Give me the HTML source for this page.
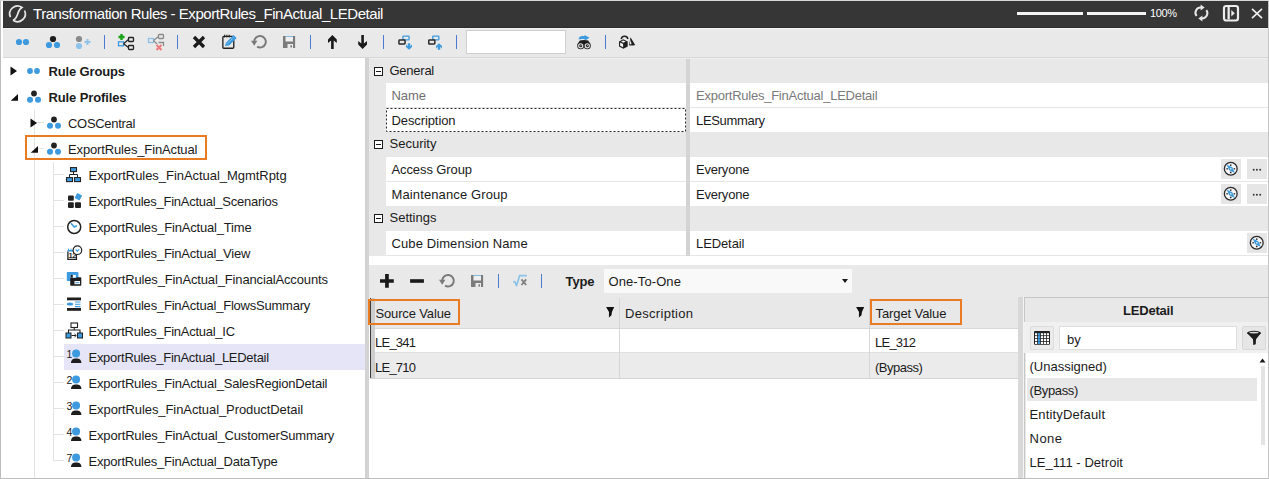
<!DOCTYPE html>
<html><head><meta charset="utf-8"><title>Transformation Rules</title>
<style>
html,body{margin:0;padding:0;}
body{width:1269px;height:479px;position:relative;overflow:hidden;background:#fff;font-family:"Liberation Sans",sans-serif;}
.t{position:absolute;white-space:nowrap;}
svg{display:block;overflow:visible;}
</style></head><body>
<div style="position:absolute;left:0px;top:0px;width:1269px;height:479px;background:#ffffff;"></div>
<div style="position:absolute;left:3px;top:1px;width:1265px;height:27px;background:#363636;"></div>
<div style="position:absolute;left:3px;top:27px;width:1265px;height:1px;background:#2c2c2c;"></div>
<svg style="position:absolute;left:6px;top:2px;" width="24" height="24" viewBox="0 0 24 24"><path d="M4.43 15.1 A7.8 7.8 0 0 1 15.97 5.41 C13 6.8, 12.6 9.5, 11.6 12.2 C10.6 15, 9.6 17.4, 7.03 18.19 A7.8 7.8 0 0 0 7.03 18.19" fill="none" stroke="#e6e6e6" stroke-width="1.7"/><path d="M18.57 8.5 A7.8 7.8 0 0 1 7.03 18.19" fill="none" stroke="#e6e6e6" stroke-width="1.7"/></svg>
<div class="t" style="left:33px;top:6.300000000000001px;font-size:15px;line-height:15px;font-weight:normal;color:#ffffff;letter-spacing:-0.45px;">Transformation Rules - ExportRules_FinActual_LEDetail</div>
<div style="position:absolute;left:1017px;top:12px;width:66px;height:3px;background:#f4f4f4;"></div>
<div style="position:absolute;left:1087px;top:12px;width:59px;height:3px;background:#f4f4f4;"></div>
<div class="t" style="left:1150px;top:8.19px;font-size:11px;line-height:11px;font-weight:normal;color:#ffffff;letter-spacing:-0.4px;">100%</div>
<svg style="position:absolute;left:1192px;top:3px;" width="18" height="19" viewBox="0 0 18 19"><path d="M4.6 13 A5.2 5.2 0 0 1 9.3 4.6" fill="none" stroke="#e6e6e6" stroke-width="2"/><path d="M8.6 1.6 L12.6 4.5 L8.6 7.6 Z" fill="#e6e6e6"/><path d="M14.4 7.2 A5.2 5.2 0 0 1 9.7 15.4" fill="none" stroke="#e6e6e6" stroke-width="2"/><path d="M10.4 12.4 L6.4 15.5 L10.4 18.4 Z" fill="#e6e6e6"/></svg>
<svg style="position:absolute;left:1222px;top:4px;" width="18" height="18" viewBox="0 0 18 18"><rect x="2" y="2" width="14" height="14.5" rx="2.2" fill="none" stroke="#ececec" stroke-width="2.2"/><rect x="5.5" y="3" width="2.3" height="12.5" fill="#ececec"/><path d="M9.3 6 L12.8 9.2 L9.3 12.6 Z" fill="#ececec"/></svg>
<svg style="position:absolute;left:1251px;top:8px;" width="12" height="11" viewBox="0 0 12 11"><path d="M1 0.8 L11 10.2 M11 0.8 L1 10.2" stroke="#ececec" stroke-width="1.7"/></svg>
<div style="position:absolute;left:3px;top:28px;width:1265px;height:1px;background:#f3f3f3;"></div>
<div style="position:absolute;left:3px;top:29px;width:1265px;height:28px;background:#e9e9e9;"></div>
<div style="position:absolute;left:3px;top:57px;width:1265px;height:1px;background:#d6d6d6;"></div>
<svg style="position:absolute;left:14px;top:37px;" width="18" height="10" viewBox="0 0 18 10"><circle cx="5" cy="5" r="3.1" fill="#3d9ade"/><circle cx="12" cy="5" r="3.1" fill="#3d9ade"/></svg>
<svg style="position:absolute;left:44px;top:34px;" width="18" height="16" viewBox="0 0 18 16"><circle cx="9" cy="5" r="3.1" fill="#1e1e1e"/><circle cx="5" cy="11" r="3.1" fill="#3d9ade"/><circle cx="13" cy="11" r="3.1" fill="#3d9ade"/></svg>
<svg style="position:absolute;left:74px;top:34px;" width="18" height="17" viewBox="0 0 18 17"><circle cx="5" cy="5" r="3.1" fill="#8a8a8a"/><circle cx="5" cy="12" r="3.1" fill="#8fc4ea"/><path d="M10.5 8 H16.5 M13.5 5 V11" stroke="#8fc4ea" stroke-width="2"/></svg>
<div style="position:absolute;left:104px;top:35px;width:1px;height:14px;background:#4b7bd0;"></div>
<svg style="position:absolute;left:116px;top:33px;" width="20" height="19" viewBox="0 0 20 19"><path d="M5.5 1 V7 M2.5 4 H8.5" stroke="#17a317" stroke-width="2.4"/><rect x="2.5" y="8.8" width="5" height="4" fill="none" stroke="#3d9ade" stroke-width="1.3"/><rect x="12.5" y="4.5" width="5" height="4" rx="0.8" fill="none" stroke="#222" stroke-width="1.3"/><rect x="12.5" y="12.5" width="5" height="4" rx="0.8" fill="none" stroke="#222" stroke-width="1.3"/><path d="M7.5 10.8 L12.5 6.5 M7.5 10.8 L12.5 14.5" stroke="#222" stroke-width="1.2" fill="none"/></svg>
<svg style="position:absolute;left:146px;top:33px;" width="20" height="19" viewBox="0 0 20 19"><rect x="2.5" y="5.5" width="5" height="4" fill="none" stroke="#8cc0e8" stroke-width="1.3"/><rect x="12.5" y="1.5" width="5" height="4" rx="0.8" fill="none" stroke="#8a8a8a" stroke-width="1.3"/><path d="M12.5 9.5 H17.5 V13" fill="none" stroke="#8a8a8a" stroke-width="1.3"/><path d="M7.5 7.5 L12.5 3.5 M7.5 7.5 L11 11" stroke="#8a8a8a" stroke-width="1.2" fill="none"/><path d="M10.5 12 L15.5 17 M15.5 12 L10.5 17" stroke="#ee7b7b" stroke-width="2"/></svg>
<div style="position:absolute;left:177px;top:35px;width:1px;height:14px;background:#4b7bd0;"></div>
<svg style="position:absolute;left:192px;top:35px;" width="14" height="14" viewBox="0 0 14 14"><path d="M2 2 L12 12 M12 2 L2 12" stroke="#1a1a1a" stroke-width="3.2"/></svg>
<svg style="position:absolute;left:221px;top:33px;" width="17" height="17" viewBox="0 0 17 17"><rect x="1.85" y="3.4" width="10.9" height="11.8" rx="1" fill="none" stroke="#222" stroke-width="1.35"/><path d="M3.6 1.8 V4.4 M5.9 1.8 V4.4 M8.2 1.8 V4.4" stroke="#222" stroke-width="1.1"/><path d="M3.9 12.9 L5.1 9.4 L12.6 1.9 L15.6 4.9 L8.1 12.4 Z" fill="#3d9ade"/><path d="M6.3 10.5 L12.5 4.3" stroke="#e8f3fb" stroke-width="0.7" stroke-dasharray="1.6 1.2"/></svg>
<svg style="position:absolute;left:250px;top:34px;" width="17" height="16" viewBox="0 0 17 16"><path d="M4.2 8 A5.8 5.8 0 1 1 7.1 12.72" fill="none" stroke="#7b7b7b" stroke-width="2"/><path d="M1 6.8 L7.4 6.8 L4.2 11.8 Z" fill="#7b7b7b"/></svg>
<svg style="position:absolute;left:282px;top:35px;" width="14" height="14" viewBox="0 0 14 14"><rect x="1" y="1" width="12.1" height="12" fill="#7b7b7b"/><rect x="3.5" y="1.7" width="7.5" height="4.8" fill="#efefef"/><rect x="3.5" y="1" width="7.5" height="0.9" fill="#7fbfe8"/><rect x="5.5" y="9" width="5.5" height="4" fill="#ebebeb"/><rect x="8.4" y="10.3" width="1.6" height="2.2" fill="#7b7b7b"/></svg>
<div style="position:absolute;left:310px;top:35px;width:1px;height:14px;background:#4b7bd0;"></div>
<svg style="position:absolute;left:326px;top:34px;" width="13" height="16" viewBox="0 0 13 16"><path d="M5.1 15 H7.7 V6.4 L10.8 9 V5.6 L6.4 1 L2 5.6 V9 L5.1 6.4 Z" fill="#1a1a1a"/></svg>
<svg style="position:absolute;left:356px;top:34px;" width="13" height="16" viewBox="0 0 13 16"><path d="M5.3 1 H7.9 V9.6 L11 7 V10.4 L6.6 15 L2.2 10.4 V7 L5.3 9.6 Z" fill="#1a1a1a"/></svg>
<div style="position:absolute;left:383px;top:35px;width:1px;height:14px;background:#4b7bd0;"></div>
<svg style="position:absolute;left:396px;top:34px;" width="18" height="17" viewBox="0 0 18 17"><rect x="6.95" y="2.05" width="6.1" height="3.9" rx="0.6" fill="none" stroke="#3d9ade" stroke-width="1.3"/><rect x="2.95" y="6.05" width="6.1" height="4" rx="0.7" fill="#e9e9e9" stroke="#2a2a2a" stroke-width="1.5"/><path d="M11.8 9.2 H14.2 V12.3 L16 10.6 V13 L13 15.8 L10 13 V10.6 L11.8 12.3 Z" fill="#3d9ade"/></svg>
<svg style="position:absolute;left:426px;top:34px;" width="18" height="17" viewBox="0 0 18 17"><rect x="6.75" y="2.05" width="6.1" height="3.9" rx="0.6" fill="none" stroke="#3d9ade" stroke-width="1.3"/><rect x="2.75" y="6.05" width="6.1" height="4" rx="0.7" fill="#e9e9e9" stroke="#2a2a2a" stroke-width="1.5"/><path d="M11.8 15.8 H14.2 V12.7 L16 14.4 V12 L13 9.2 L10 12 V14.4 L11.8 12.7 Z" fill="#3d9ade"/></svg>
<div style="position:absolute;left:456px;top:35px;width:1px;height:14px;background:#4b7bd0;"></div>
<div style="position:absolute;left:466px;top:30px;width:100px;height:24px;background:#ffffff;box-sizing:border-box;border:1px solid #cfcfcf;"></div>
<svg style="position:absolute;left:576px;top:34px;" width="15" height="16" viewBox="0 0 15 16"><path d="M2.6 5.6 C2.6 3.2, 4.2 2.1, 6.6 2.1 H8.6 V0.9 L13.6 3.8 L8.6 6.8 V4.9 H6.8 C4.8 4.9, 3.8 5, 2.6 5.6 Z" fill="#3d9ade"/><path d="M1.6 10 L3.8 6.6 Q8 5.6, 12.2 6.6 L14.4 10 Z" fill="#1e1e1e"/><circle cx="4.7" cy="11.7" r="3.5" fill="#1e1e1e"/><circle cx="11.3" cy="11.7" r="3.5" fill="#1e1e1e"/><circle cx="4.7" cy="11.8" r="2.1" fill="none" stroke="#e4e4e4" stroke-width="1.1"/><circle cx="11.3" cy="11.8" r="2.1" fill="none" stroke="#e4e4e4" stroke-width="1.1"/><path d="M4 12.5 L5.4 11.1 M10.6 12.5 L12 11.1" stroke="#e4e4e4" stroke-width="0.8"/></svg>
<div style="position:absolute;left:605px;top:35px;width:1px;height:14px;background:#4b7bd0;"></div>
<svg style="position:absolute;left:618px;top:34px;" width="18" height="16" viewBox="0 0 18 16"><path d="M3.2 5.2 A3.4 3.4 0 0 1 9.9 5.0" fill="none" stroke="#1f1f1f" stroke-width="1.5"/><path d="M1 7.6 L5.3 5.3 L9.7 7.6 V12.6 L5.4 14.7 L1 12.6 Z" fill="#1f1f1f"/><path d="M2.1 8.6 L5.1 10.1 V13.3 L2.1 11.8 Z" fill="#f4f4f4"/><path d="M3 7.6 L5.3 6.5 L7.7 7.6 L5.3 8.8 Z" fill="#f4f4f4"/><path d="M12.5 3.2 L17.2 11 Q14 12, 11 11.2 Z" fill="#1f1f1f"/><path d="M12.2 5.6 L13.6 10.2 L11.9 10.3 Z" fill="#f0f0f0"/></svg>
<div style="position:absolute;left:3px;top:58px;width:362px;height:420px;background:#ffffff;"></div>
<div style="position:absolute;left:34px;top:110px;width:1px;height:368px;background:#e3e3e3;"></div>
<div style="position:absolute;left:53px;top:162px;width:1px;height:299px;background:#e3e3e3;"></div>
<div style="position:absolute;left:36px;top:122px;width:8px;height:1px;background:#e3e3e3;"></div>
<div style="position:absolute;left:36px;top:148px;width:8px;height:1px;background:#e3e3e3;"></div>
<div style="position:absolute;left:54px;top:174px;width:10px;height:1px;background:#e3e3e3;"></div>
<div style="position:absolute;left:54px;top:200px;width:10px;height:1px;background:#e3e3e3;"></div>
<div style="position:absolute;left:54px;top:226px;width:10px;height:1px;background:#e3e3e3;"></div>
<div style="position:absolute;left:54px;top:252px;width:10px;height:1px;background:#e3e3e3;"></div>
<div style="position:absolute;left:54px;top:278px;width:10px;height:1px;background:#e3e3e3;"></div>
<div style="position:absolute;left:54px;top:304px;width:10px;height:1px;background:#e3e3e3;"></div>
<div style="position:absolute;left:54px;top:330px;width:10px;height:1px;background:#e3e3e3;"></div>
<div style="position:absolute;left:54px;top:356px;width:10px;height:1px;background:#e3e3e3;"></div>
<div style="position:absolute;left:54px;top:382px;width:10px;height:1px;background:#e3e3e3;"></div>
<div style="position:absolute;left:54px;top:408px;width:10px;height:1px;background:#e3e3e3;"></div>
<div style="position:absolute;left:54px;top:434px;width:10px;height:1px;background:#e3e3e3;"></div>
<div style="position:absolute;left:54px;top:460px;width:10px;height:1px;background:#e3e3e3;"></div>
<div style="position:absolute;left:64px;top:344px;width:301px;height:26px;background:#e5e5f7;"></div>
<div style="position:absolute;left:25px;top:135px;width:182px;height:25px;box-sizing:border-box;border:2px solid #e97b22;"></div>
<svg style="position:absolute;left:10px;top:66px;" width="8" height="10" viewBox="0 0 8 10"><path d="M0.5 0.5 L7 5 L0.5 9.5 Z" fill="#111"/></svg>
<svg style="position:absolute;left:11px;top:94px;" width="8" height="8" viewBox="0 0 8 8"><path d="M7 0 V6.8 H-0.3 Z" fill="#111"/></svg>
<svg style="position:absolute;left:30px;top:118px;" width="8" height="10" viewBox="0 0 8 10"><path d="M0.5 0.5 L7 5 L0.5 9.5 Z" fill="#111"/></svg>
<svg style="position:absolute;left:31px;top:146px;" width="8" height="8" viewBox="0 0 8 8"><path d="M7 0 V6.8 H-0.3 Z" fill="#111"/></svg>
<svg style="position:absolute;left:25px;top:66px;" width="16" height="10" viewBox="0 0 16 10"><circle cx="5" cy="5" r="2.9" fill="#3d9ade"/><circle cx="12" cy="5" r="2.9" fill="#3d9ade"/></svg>
<svg style="position:absolute;left:26px;top:90px;" width="16" height="14" viewBox="0 0 16 14"><circle cx="8" cy="3.5" r="2.9" fill="#222"/><circle cx="4" cy="9.8" r="3" fill="#3d9ade"/><circle cx="12" cy="9.8" r="3" fill="#3d9ade"/></svg>
<svg style="position:absolute;left:46px;top:116px;" width="16" height="14" viewBox="0 0 16 14"><circle cx="8" cy="3.5" r="2.9" fill="#222"/><circle cx="4" cy="9.8" r="3" fill="#3d9ade"/><circle cx="12" cy="9.8" r="3" fill="#3d9ade"/></svg>
<svg style="position:absolute;left:46px;top:142px;" width="16" height="14" viewBox="0 0 16 14"><circle cx="8" cy="3.5" r="2.9" fill="#222"/><circle cx="4" cy="9.8" r="3" fill="#3d9ade"/><circle cx="12" cy="9.8" r="3" fill="#3d9ade"/></svg>
<div class="t" style="left:48.5px;top:65.0px;font-size:13px;line-height:13px;font-weight:bold;color:#1b1b1b;letter-spacing:-0.15px;">Rule Groups</div>
<div class="t" style="left:48.5px;top:91.0px;font-size:13px;line-height:13px;font-weight:bold;color:#1b1b1b;letter-spacing:-0.12px;">Rule Profiles</div>
<div class="t" style="left:68px;top:117.0px;font-size:13px;line-height:13px;font-weight:normal;color:#1b1b1b;letter-spacing:-0.3px;">COSCentral</div>
<div class="t" style="left:68px;top:143.0px;font-size:13px;line-height:13px;font-weight:normal;color:#1b1b1b;letter-spacing:-0.14px;">ExportRules_FinActual</div>
<div class="t" style="left:88.5px;top:169.0px;font-size:13px;line-height:13px;font-weight:normal;color:#1b1b1b;letter-spacing:-0.045px;">ExportRules_FinActual_MgmtRptg</div>
<div class="t" style="left:88.5px;top:195.0px;font-size:13px;line-height:13px;font-weight:normal;color:#1b1b1b;letter-spacing:-0.257px;">ExportRules_FinActual_Scenarios</div>
<div class="t" style="left:88.5px;top:221.0px;font-size:13px;line-height:13px;font-weight:normal;color:#1b1b1b;letter-spacing:-0.19px;">ExportRules_FinActual_Time</div>
<div class="t" style="left:88.5px;top:247.0px;font-size:13px;line-height:13px;font-weight:normal;color:#1b1b1b;letter-spacing:-0.22px;">ExportRules_FinActual_View</div>
<div class="t" style="left:88.5px;top:273.0px;font-size:13px;line-height:13px;font-weight:normal;color:#1b1b1b;letter-spacing:-0.145px;">ExportRules_FinActual_FinancialAccounts</div>
<div class="t" style="left:88.5px;top:299.0px;font-size:13px;line-height:13px;font-weight:normal;color:#1b1b1b;letter-spacing:-0.218px;">ExportRules_FinActual_FlowsSummary</div>
<div class="t" style="left:88.5px;top:325.0px;font-size:13px;line-height:13px;font-weight:normal;color:#1b1b1b;letter-spacing:-0.257px;">ExportRules_FinActual_IC</div>
<div class="t" style="left:88.5px;top:351.0px;font-size:13px;line-height:13px;font-weight:normal;color:#1b1b1b;letter-spacing:-0.276px;">ExportRules_FinActual_LEDetail</div>
<div class="t" style="left:88.5px;top:377.0px;font-size:13px;line-height:13px;font-weight:normal;color:#1b1b1b;letter-spacing:-0.195px;">ExportRules_FinActual_SalesRegionDetail</div>
<div class="t" style="left:88.5px;top:403.0px;font-size:13px;line-height:13px;font-weight:normal;color:#1b1b1b;letter-spacing:-0.085px;">ExportRules_FinActual_ProductDetail</div>
<div class="t" style="left:88.5px;top:429.0px;font-size:13px;line-height:13px;font-weight:normal;color:#1b1b1b;letter-spacing:-0.156px;">ExportRules_FinActual_CustomerSummary</div>
<div class="t" style="left:88.5px;top:455.0px;font-size:13px;line-height:13px;font-weight:normal;color:#1b1b1b;letter-spacing:-0.203px;">ExportRules_FinActual_DataType</div>
<svg style="position:absolute;left:65px;top:166px;" width="17" height="17" viewBox="0 0 17 17"><rect x="5.5" y="1.6" width="6" height="4" fill="#3d9ade" stroke="#222" stroke-width="1.1"/><path d="M8.5 5.6 V8.5 M4.5 11.5 V8.5 H12.5 V11.5" stroke="#222" stroke-width="1" fill="none"/><rect x="1.5" y="11.6" width="6" height="4" fill="#3d9ade" stroke="#222" stroke-width="1.1"/><rect x="9.5" y="11.6" width="6" height="4" fill="#3d9ade" stroke="#222" stroke-width="1.1"/></svg>
<svg style="position:absolute;left:65px;top:193px;" width="18" height="16" viewBox="0 0 18 16"><rect x="3" y="2.5" width="5.8" height="5.2" rx="1" fill="#222"/><rect x="3" y="9.2" width="5.8" height="5.8" rx="1" fill="#222"/><rect x="10" y="9.2" width="6" height="5.8" rx="1" fill="#222"/><rect x="10.6" y="0.9" width="5.6" height="5.6" rx="0.6" fill="#3d9ade" transform="rotate(28 13.4 3.7)"/></svg>
<svg style="position:absolute;left:65px;top:218px;" width="18" height="18" viewBox="0 0 18 18"><circle cx="9.2" cy="9" r="6.5" fill="none" stroke="#222" stroke-width="1.5"/><path d="M6 5.2 L9.2 9 L12 7.8" stroke="#3d9ade" stroke-width="1.6" fill="none" stroke-linejoin="round"/></svg>
<svg style="position:absolute;left:65px;top:245px;" width="18" height="17" viewBox="0 0 18 17"><path d="M2.9 6.5 V14.3 H11.4 V8" fill="none" stroke="#222" stroke-width="1.3"/><rect x="2.5" y="5" width="5.5" height="1.6" fill="#3d9ade"/><path d="M3.6 3.6 V5.5 M6 3.6 V5.5" stroke="#3d9ade" stroke-width="1"/><text x="3.6" y="13.3" font-size="7.5" font-family="Liberation Sans" font-weight="bold" fill="#222" letter-spacing="-0.6">12</text><circle cx="12.4" cy="5.2" r="4.3" fill="#fff" stroke="#222" stroke-width="1.2"/><path d="M10.6 4.3 L12.4 6.2 L14.2 4.3" stroke="#3d9ade" stroke-width="1.2" fill="none"/></svg>
<svg style="position:absolute;left:65px;top:271px;" width="18" height="17" viewBox="0 0 18 17"><rect x="1.8" y="1" width="11.6" height="9" rx="0.8" fill="#3d9ade"/><rect x="5.2" y="6.2" width="11.1" height="8.6" rx="0.8" fill="#1e1e1e"/><rect x="9.5" y="10" width="5.5" height="3.2" fill="#fff"/><rect x="10.2" y="11.2" width="4.2" height="1" fill="#3d9ade"/><rect x="5" y="3.6" width="6.5" height="3.4" fill="#3d9ade"/><rect x="5.8" y="3.9" width="5" height="2.8" fill="#fff"/><rect x="5.8" y="3.9" width="2" height="2.8" fill="#1e1e1e"/></svg>
<svg style="position:absolute;left:65px;top:296px;" width="17" height="16" viewBox="0 0 17 16"><rect x="2" y="1.5" width="14" height="2.8" fill="#1e1e1e"/><rect x="2" y="12" width="14" height="2.8" fill="#1e1e1e"/><ellipse cx="5" cy="8" rx="3.2" ry="1.6" fill="#3d9ade"/><path d="M10 6 H15.5 M10 8.3 H15.5 M10 10.6 H15.5" stroke="#3d9ade" stroke-width="1.1"/></svg>
<svg style="position:absolute;left:65px;top:322px;" width="18" height="18" viewBox="0 0 18 18"><rect x="6" y="1" width="6.5" height="4.5" fill="#fff" stroke="#222" stroke-width="1.1"/><path d="M9.2 5.5 V8 M3.5 11 V8 H15 V11" stroke="#222" stroke-width="1.1" fill="none"/><rect x="1" y="11" width="5" height="5" fill="#3d9ade" stroke="#222" stroke-width="1"/><rect x="12.5" y="11" width="5" height="5" fill="#3d9ade" stroke="#222" stroke-width="1"/><path d="M6.5 13.5 H11.2 M9.5 12 L11.2 13.5 L9.5 15" stroke="#222" stroke-width="1" fill="none"/></svg>
<svg style="position:absolute;left:65px;top:348px;" width="18" height="18" viewBox="0 0 18 18"><text x="1.6" y="9.5" font-size="10.5" font-family="Liberation Sans" fill="#1a1a1a">1</text><circle cx="11.1" cy="5.6" r="4" fill="#3d9ade"/><path d="M6 15 C6 11.6, 8 10.4, 11.2 10.4 C14.4 10.4, 16.4 11.6, 16.4 15 Z" fill="#1e1e1e"/></svg>
<svg style="position:absolute;left:65px;top:374px;" width="18" height="18" viewBox="0 0 18 18"><text x="1.6" y="9.5" font-size="10.5" font-family="Liberation Sans" fill="#1a1a1a">2</text><circle cx="11.1" cy="5.6" r="4" fill="#3d9ade"/><path d="M6 15 C6 11.6, 8 10.4, 11.2 10.4 C14.4 10.4, 16.4 11.6, 16.4 15 Z" fill="#1e1e1e"/></svg>
<svg style="position:absolute;left:65px;top:400px;" width="18" height="18" viewBox="0 0 18 18"><text x="1.6" y="9.5" font-size="10.5" font-family="Liberation Sans" fill="#1a1a1a">3</text><circle cx="11.1" cy="5.6" r="4" fill="#3d9ade"/><path d="M6 15 C6 11.6, 8 10.4, 11.2 10.4 C14.4 10.4, 16.4 11.6, 16.4 15 Z" fill="#1e1e1e"/></svg>
<svg style="position:absolute;left:65px;top:426px;" width="18" height="18" viewBox="0 0 18 18"><text x="1.6" y="9.5" font-size="10.5" font-family="Liberation Sans" fill="#1a1a1a">4</text><circle cx="11.1" cy="5.6" r="4" fill="#3d9ade"/><path d="M6 15 C6 11.6, 8 10.4, 11.2 10.4 C14.4 10.4, 16.4 11.6, 16.4 15 Z" fill="#1e1e1e"/></svg>
<svg style="position:absolute;left:65px;top:452px;" width="18" height="18" viewBox="0 0 18 18"><text x="1.6" y="9.5" font-size="10.5" font-family="Liberation Sans" fill="#1a1a1a">7</text><circle cx="11.1" cy="5.6" r="4" fill="#3d9ade"/><path d="M6 15 C6 11.6, 8 10.4, 11.2 10.4 C14.4 10.4, 16.4 11.6, 16.4 15 Z" fill="#1e1e1e"/></svg>
<div style="position:absolute;left:365px;top:58px;width:4px;height:420px;background:#d3d3d3;"></div>
<div style="position:absolute;left:369px;top:58px;width:899px;height:1px;background:#f0f0f0;"></div>
<div style="position:absolute;left:369px;top:59px;width:899px;height:197px;background:#e8e8e8;"></div>
<svg style="position:absolute;left:374px;top:67px;" width="10" height="10" viewBox="0 0 10 10"><rect x="0.5" y="0.5" width="8" height="8" fill="#fff" stroke="#1a1a1a" stroke-width="1"/><rect x="2" y="4" width="5" height="1" fill="#1a1a1a"/></svg>
<div class="t" style="left:389.5px;top:64.0px;font-size:13px;line-height:13px;font-weight:normal;color:#1b1b1b;letter-spacing:-0.25px;">General</div>
<div style="position:absolute;left:386px;top:83px;width:882px;height:24px;background:#ffffff;"></div>
<div class="t" style="left:391.5px;top:89.2px;font-size:13px;line-height:13px;font-weight:normal;color:#707070;letter-spacing:-0.1px;">Name</div>
<div class="t" style="left:696px;top:89.2px;font-size:13px;line-height:13px;font-weight:normal;color:#7a7a7a;letter-spacing:-0.24px;">ExportRules_FinActual_LEDetail</div>
<div style="position:absolute;left:386px;top:108px;width:882px;height:24px;background:#ffffff;"></div>
<div class="t" style="left:391.5px;top:114.2px;font-size:13px;line-height:13px;font-weight:normal;color:#1b1b1b;letter-spacing:-0.1px;">Description</div>
<div class="t" style="left:696px;top:114.2px;font-size:13px;line-height:13px;font-weight:normal;color:#1b1b1b;letter-spacing:-0.32px;">LESummary</div>
<svg style="position:absolute;left:374px;top:140px;" width="10" height="10" viewBox="0 0 10 10"><rect x="0.5" y="0.5" width="8" height="8" fill="#fff" stroke="#1a1a1a" stroke-width="1"/><rect x="2" y="4" width="5" height="1" fill="#1a1a1a"/></svg>
<div class="t" style="left:389.5px;top:137.0px;font-size:13px;line-height:13px;font-weight:normal;color:#1b1b1b;letter-spacing:0px;">Security</div>
<div style="position:absolute;left:386px;top:157px;width:882px;height:24px;background:#ffffff;"></div>
<div class="t" style="left:391.5px;top:163.2px;font-size:13px;line-height:13px;font-weight:normal;color:#1b1b1b;letter-spacing:-0.1px;">Access Group</div>
<div class="t" style="left:696px;top:163.2px;font-size:13px;line-height:13px;font-weight:normal;color:#1b1b1b;letter-spacing:-0.22px;">Everyone</div>
<div style="position:absolute;left:386px;top:182px;width:882px;height:24px;background:#ffffff;"></div>
<div class="t" style="left:391.5px;top:188.2px;font-size:13px;line-height:13px;font-weight:normal;color:#1b1b1b;letter-spacing:0.12px;">Maintenance Group</div>
<div class="t" style="left:696px;top:188.2px;font-size:13px;line-height:13px;font-weight:normal;color:#1b1b1b;letter-spacing:-0.22px;">Everyone</div>
<svg style="position:absolute;left:374px;top:214px;" width="10" height="10" viewBox="0 0 10 10"><rect x="0.5" y="0.5" width="8" height="8" fill="#fff" stroke="#1a1a1a" stroke-width="1"/><rect x="2" y="4" width="5" height="1" fill="#1a1a1a"/></svg>
<div class="t" style="left:389.5px;top:211.0px;font-size:13px;line-height:13px;font-weight:normal;color:#1b1b1b;letter-spacing:0px;">Settings</div>
<div style="position:absolute;left:386px;top:231px;width:882px;height:24px;background:#ffffff;"></div>
<div class="t" style="left:391.5px;top:237.2px;font-size:13px;line-height:13px;font-weight:normal;color:#1b1b1b;letter-spacing:0.1px;">Cube Dimension Name</div>
<div class="t" style="left:696px;top:237.2px;font-size:13px;line-height:13px;font-weight:normal;color:#1b1b1b;letter-spacing:-0.1px;">LEDetail</div>
<div style="position:absolute;left:386px;top:107px;width:882px;height:1px;background:#e6e6e6;"></div>
<div style="position:absolute;left:386px;top:181px;width:882px;height:1px;background:#e6e6e6;"></div>
<div style="position:absolute;left:386px;top:255px;width:882px;height:1px;background:#e6e6e6;"></div>
<svg style="position:absolute;left:386px;top:108px;" width="300" height="24" viewBox="0 0 300 24"><rect x="0.5" y="0.5" width="299" height="23" fill="none" stroke="#222" stroke-width="1" stroke-dasharray="2 2"/></svg>
<div style="position:absolute;left:686px;top:59px;width:4px;height:197px;background:#d4d4d4;"></div>
<div style="position:absolute;left:1221px;top:159px;width:20px;height:20px;background:#e6e6e6;"></div>
<svg style="position:absolute;left:1221px;top:159px;" width="20" height="20" viewBox="0 0 20 20"><circle cx="9.75" cy="9.75" r="6.4" fill="#f7f7f7" stroke="#2a2a2a" stroke-width="1.3"/><path d="M5.6 5.6 L11.3 8.2 L13.9 13.9 L8.2 11.3 Z" fill="#3d9ade"/><rect x="9" y="9" width="1.5" height="1.5" fill="#cfe6f7"/><circle cx="9.75" cy="6.1" r="0.85" fill="#2a2a2a"/><circle cx="9.75" cy="13.4" r="0.85" fill="#2a2a2a"/><circle cx="6.1" cy="9.75" r="0.85" fill="#2a2a2a"/><circle cx="13.4" cy="9.75" r="0.85" fill="#2a2a2a"/></svg>
<div style="position:absolute;left:1247px;top:159px;width:20px;height:20px;background:#e6e6e6;"></div>
<svg style="position:absolute;left:1247px;top:159px;" width="20" height="20" viewBox="0 0 20 20"><circle cx="6.7" cy="10.8" r="0.95" fill="#333"/><circle cx="9.9" cy="10.8" r="0.95" fill="#333"/><circle cx="13.2" cy="10.8" r="0.95" fill="#333"/></svg>
<div style="position:absolute;left:1221px;top:184px;width:20px;height:20px;background:#e6e6e6;"></div>
<svg style="position:absolute;left:1221px;top:184px;" width="20" height="20" viewBox="0 0 20 20"><circle cx="9.75" cy="9.75" r="6.4" fill="#f7f7f7" stroke="#2a2a2a" stroke-width="1.3"/><path d="M5.6 5.6 L11.3 8.2 L13.9 13.9 L8.2 11.3 Z" fill="#3d9ade"/><rect x="9" y="9" width="1.5" height="1.5" fill="#cfe6f7"/><circle cx="9.75" cy="6.1" r="0.85" fill="#2a2a2a"/><circle cx="9.75" cy="13.4" r="0.85" fill="#2a2a2a"/><circle cx="6.1" cy="9.75" r="0.85" fill="#2a2a2a"/><circle cx="13.4" cy="9.75" r="0.85" fill="#2a2a2a"/></svg>
<div style="position:absolute;left:1247px;top:184px;width:20px;height:20px;background:#e6e6e6;"></div>
<svg style="position:absolute;left:1247px;top:184px;" width="20" height="20" viewBox="0 0 20 20"><circle cx="6.7" cy="10.8" r="0.95" fill="#333"/><circle cx="9.9" cy="10.8" r="0.95" fill="#333"/><circle cx="13.2" cy="10.8" r="0.95" fill="#333"/></svg>
<div style="position:absolute;left:1247px;top:233px;width:20px;height:20px;background:#e6e6e6;"></div>
<svg style="position:absolute;left:1247px;top:233px;" width="20" height="20" viewBox="0 0 20 20"><circle cx="9.75" cy="9.75" r="6.4" fill="#f7f7f7" stroke="#2a2a2a" stroke-width="1.3"/><path d="M5.6 5.6 L11.3 8.2 L13.9 13.9 L8.2 11.3 Z" fill="#3d9ade"/><rect x="9" y="9" width="1.5" height="1.5" fill="#cfe6f7"/><circle cx="9.75" cy="6.1" r="0.85" fill="#2a2a2a"/><circle cx="9.75" cy="13.4" r="0.85" fill="#2a2a2a"/><circle cx="6.1" cy="9.75" r="0.85" fill="#2a2a2a"/><circle cx="13.4" cy="9.75" r="0.85" fill="#2a2a2a"/></svg>
<div style="position:absolute;left:369px;top:256px;width:899px;height:9px;background:#ffffff;"></div>
<div style="position:absolute;left:369px;top:265px;width:899px;height:33px;background:#e9e9e9;"></div>
<svg style="position:absolute;left:379px;top:274px;" width="16" height="15" viewBox="0 0 16 15"><path d="M6.1 0.1 H9.8 V5.2 H14.8 V8.8 H9.8 V13.7 H6.1 V8.8 H1 V5.2 H6.1 Z" fill="#1a1a1a"/></svg>
<svg style="position:absolute;left:409px;top:279px;" width="16" height="5" viewBox="0 0 16 5"><rect x="1.1" y="0.2" width="13.8" height="3.6" fill="#1a1a1a"/></svg>
<svg style="position:absolute;left:438px;top:273px;" width="17" height="16" viewBox="0 0 17 16"><path d="M4.2 8 A5.8 5.8 0 1 1 7.1 12.72" fill="none" stroke="#7b7b7b" stroke-width="2"/><path d="M1 6.8 L7.4 6.8 L4.2 11.8 Z" fill="#7b7b7b"/></svg>
<svg style="position:absolute;left:470px;top:274px;" width="14" height="14" viewBox="0 0 14 14"><rect x="1" y="1" width="12.1" height="12" fill="#7b7b7b"/><rect x="3.5" y="1.7" width="7.5" height="4.8" fill="#efefef"/><rect x="3.5" y="1" width="7.5" height="0.9" fill="#7fbfe8"/><rect x="5.5" y="9" width="5.5" height="4" fill="#ebebeb"/><rect x="8.4" y="10.3" width="1.6" height="2.2" fill="#7b7b7b"/></svg>
<div style="position:absolute;left:498px;top:274px;width:1px;height:14px;background:#4b7bd0;"></div>
<svg style="position:absolute;left:511px;top:274px;" width="17" height="14" viewBox="0 0 17 14"><path d="M2.2 8 L3.8 7.6 L5.6 11.6 L8.6 1.7 H15.8" fill="none" stroke="#8cc3e8" stroke-width="1.7" stroke-linejoin="round"/><path d="M10.5 5.4 L15.2 11 M15.2 5.4 L10.5 11" stroke="#7f7f7f" stroke-width="1.8"/></svg>
<div style="position:absolute;left:541px;top:274px;width:1px;height:14px;background:#4b7bd0;"></div>
<div class="t" style="left:565.5px;top:274.8px;font-size:13px;line-height:13px;font-weight:bold;color:#1b1b1b;letter-spacing:-0.1px;">Type</div>
<div style="position:absolute;left:604px;top:269px;width:248px;height:24px;background:#f9f9f9;"></div>
<div class="t" style="left:608.5px;top:274.8px;font-size:13px;line-height:13px;font-weight:normal;color:#1b1b1b;letter-spacing:0.1px;">One-To-One</div>
<svg style="position:absolute;left:842px;top:279px;" width="7" height="5" viewBox="0 0 7 5"><path d="M0 0 H6 L3 4 Z" fill="#1a1a1a"/></svg>
<div style="position:absolute;left:369px;top:298px;width:650px;height:80px;background:#ffffff;"></div>
<div style="position:absolute;left:370px;top:298px;width:1px;height:81px;background:#3c3c3c;"></div>
<div style="position:absolute;left:371px;top:298px;width:4px;height:81px;background:#cdcdcd;"></div>
<div style="position:absolute;left:375px;top:298px;width:643px;height:30px;background:#e8e8e8;"></div>
<div style="position:absolute;left:375px;top:328px;width:643px;height:1px;background:#d8d8d8;"></div>
<div style="position:absolute;left:375px;top:329px;width:643px;height:23px;background:#ffffff;"></div>
<div style="position:absolute;left:375px;top:352px;width:643px;height:1px;background:#e0e0e0;"></div>
<div style="position:absolute;left:375px;top:353px;width:643px;height:25px;background:#ebebeb;"></div>
<div style="position:absolute;left:370px;top:378px;width:648px;height:1px;background:#d4d4d4;"></div>
<div style="position:absolute;left:619px;top:298px;width:1px;height:80px;background:#d6d6d6;"></div>
<div style="position:absolute;left:869px;top:298px;width:1px;height:80px;background:#d6d6d6;"></div>
<div class="t" style="left:375.5px;top:307.0px;font-size:13px;line-height:13px;font-weight:normal;color:#1b1b1b;letter-spacing:-0.15px;">Source Value</div>
<div class="t" style="left:625px;top:307.0px;font-size:13px;line-height:13px;font-weight:normal;color:#1b1b1b;letter-spacing:0.3px;">Description</div>
<div class="t" style="left:875.5px;top:307.0px;font-size:13px;line-height:13px;font-weight:normal;color:#1b1b1b;letter-spacing:-0.1px;">Target Value</div>
<svg style="position:absolute;left:606px;top:307px;" width="9" height="11" viewBox="0 0 9 11"><path d="M0.1 0.1 H8.2 L5.9 5 L5.5 8.2 L2.9 10.6 L3 5 Z" fill="#111"/></svg>
<svg style="position:absolute;left:856px;top:307px;" width="9" height="11" viewBox="0 0 9 11"><path d="M0.1 0.1 H8.2 L5.9 5 L5.5 8.2 L2.9 10.6 L3 5 Z" fill="#111"/></svg>
<div style="position:absolute;left:368px;top:299px;width:92px;height:26px;box-sizing:border-box;border:2px solid #e97b22;"></div>
<div style="position:absolute;left:870px;top:299px;width:92px;height:26px;box-sizing:border-box;border:2px solid #e97b22;"></div>
<div class="t" style="left:375px;top:336.0px;font-size:13px;line-height:13px;font-weight:normal;color:#1b1b1b;letter-spacing:-0.76px;">LE_341</div>
<div class="t" style="left:375px;top:360.5px;font-size:13px;line-height:13px;font-weight:normal;color:#1b1b1b;letter-spacing:-0.76px;">LE_710</div>
<div class="t" style="left:875px;top:336.0px;font-size:13px;line-height:13px;font-weight:normal;color:#1b1b1b;letter-spacing:-0.76px;">LE_312</div>
<div class="t" style="left:875px;top:360.5px;font-size:13px;line-height:13px;font-weight:normal;color:#1b1b1b;letter-spacing:-0.5px;">(Bypass)</div>
<div style="position:absolute;left:1018px;top:297px;width:5px;height:181px;background:#d8d8d8;"></div>
<div style="position:absolute;left:1023px;top:297px;width:1px;height:181px;background:#f4f4f4;"></div>
<div style="position:absolute;left:1024px;top:297px;width:244px;height:181px;box-sizing:border-box;border:1px solid #c6c6c6;border-right:none;border-bottom:none;background:#e8e8e8;"></div>
<div class="t" style="left:1123px;top:304.0px;font-size:13px;line-height:13px;font-weight:bold;color:#1b1b1b;letter-spacing:-0.2px;">LEDetail</div>
<div style="position:absolute;left:1024px;top:322px;width:244px;height:31px;background:#f0f0f0;"></div>
<div style="position:absolute;left:1030px;top:326px;width:24px;height:24px;background:#ebebeb;box-sizing:border-box;border:1px solid #dcdcdc;border-radius:2px;"></div>
<svg style="position:absolute;left:1033px;top:329px;" width="18" height="18" viewBox="0 0 18 18"><rect x="1" y="2" width="16" height="13.8" rx="1" fill="#222"/><rect x="2.00" y="4.20" width="2.16" height="2.1" fill="#ffffff"/><rect x="2.00" y="7.10" width="2.16" height="2.1" fill="#ffffff"/><rect x="2.00" y="10.00" width="2.16" height="2.1" fill="#ffffff"/><rect x="2.00" y="12.90" width="2.16" height="2.1" fill="#ffffff"/><rect x="4.96" y="4.20" width="2.16" height="2.1" fill="#3d9ade"/><rect x="4.96" y="7.10" width="2.16" height="2.1" fill="#3d9ade"/><rect x="4.96" y="10.00" width="2.16" height="2.1" fill="#3d9ade"/><rect x="4.96" y="12.90" width="2.16" height="2.1" fill="#3d9ade"/><rect x="7.92" y="4.20" width="2.16" height="2.1" fill="#ffffff"/><rect x="7.92" y="7.10" width="2.16" height="2.1" fill="#ffffff"/><rect x="7.92" y="10.00" width="2.16" height="2.1" fill="#ffffff"/><rect x="7.92" y="12.90" width="2.16" height="2.1" fill="#ffffff"/><rect x="10.88" y="4.20" width="2.16" height="2.1" fill="#ffffff"/><rect x="10.88" y="7.10" width="2.16" height="2.1" fill="#ffffff"/><rect x="10.88" y="10.00" width="2.16" height="2.1" fill="#ffffff"/><rect x="10.88" y="12.90" width="2.16" height="2.1" fill="#ffffff"/><rect x="13.84" y="4.20" width="2.16" height="2.1" fill="#ffffff"/><rect x="13.84" y="7.10" width="2.16" height="2.1" fill="#ffffff"/><rect x="13.84" y="10.00" width="2.16" height="2.1" fill="#ffffff"/><rect x="13.84" y="12.90" width="2.16" height="2.1" fill="#ffffff"/><rect x="4.96" y="4.2" width="2.16" height="10.8" fill="#3d9ade" opacity="0.55"/></svg>
<div style="position:absolute;left:1059px;top:326px;width:178px;height:24px;background:#ffffff;box-sizing:border-box;border:1px solid #dedede;"></div>
<div class="t" style="left:1067px;top:332.5px;font-size:13px;line-height:13px;font-weight:normal;color:#1b1b1b;">by</div>
<div style="position:absolute;left:1242px;top:326px;width:24px;height:24px;background:#e6e6e6;box-sizing:border-box;border:1px solid #d8d8d8;border-radius:2px;"></div>
<svg style="position:absolute;left:1245px;top:330px;" width="17" height="16" viewBox="0 0 17 16"><ellipse cx="9" cy="3" rx="7" ry="2.2" fill="#1e1e1e"/><path d="M2 3 H16 L11 9.2 L10.8 14.2 L8.2 15 L8 9.2 Z" fill="#1e1e1e"/><ellipse cx="9" cy="2.6" rx="4.6" ry="0.9" fill="#d8d8d8"/></svg>
<div style="position:absolute;left:1026px;top:353px;width:242px;height:125px;background:#ffffff;"></div>
<div style="position:absolute;left:1027px;top:378px;width:230px;height:23px;background:#e8e8e8;"></div>
<div class="t" style="left:1029.5px;top:359.5px;font-size:13px;line-height:13px;font-weight:normal;color:#1b1b1b;letter-spacing:0px;">(Unassigned)</div>
<div class="t" style="left:1029.5px;top:383.6px;font-size:13px;line-height:13px;font-weight:normal;color:#1b1b1b;letter-spacing:-0.35px;">(Bypass)</div>
<div class="t" style="left:1029.5px;top:407.7px;font-size:13px;line-height:13px;font-weight:normal;color:#1b1b1b;letter-spacing:0.15px;">EntityDefault</div>
<div class="t" style="left:1029.5px;top:431.8px;font-size:13px;line-height:13px;font-weight:normal;color:#1b1b1b;letter-spacing:0.5px;">None</div>
<div class="t" style="left:1029.5px;top:455.9px;font-size:13px;line-height:13px;font-weight:normal;color:#1b1b1b;letter-spacing:0.05px;">LE_111 - Detroit</div>
<svg style="position:absolute;left:1259px;top:358px;" width="8" height="5" viewBox="0 0 8 5"><path d="M0.5 4.5 L3.5 0.5 L6.5 4.5 Z" fill="#1a1a1a"/></svg>
<div style="position:absolute;left:1261px;top:366px;width:4px;height:79px;background:#e3e3e3;"></div>
<div style="position:absolute;left:0px;top:0px;width:1px;height:479px;background:#bdbdbd;"></div>
<div style="position:absolute;left:1268px;top:0px;width:1px;height:479px;background:#c4c4c4;"></div>
<div style="position:absolute;left:0px;top:478px;width:1269px;height:1px;background:#bdbdbd;"></div>
<div style="position:absolute;left:0px;top:0px;width:1269px;height:1px;background:#d8d8d8;"></div>
</body></html>
